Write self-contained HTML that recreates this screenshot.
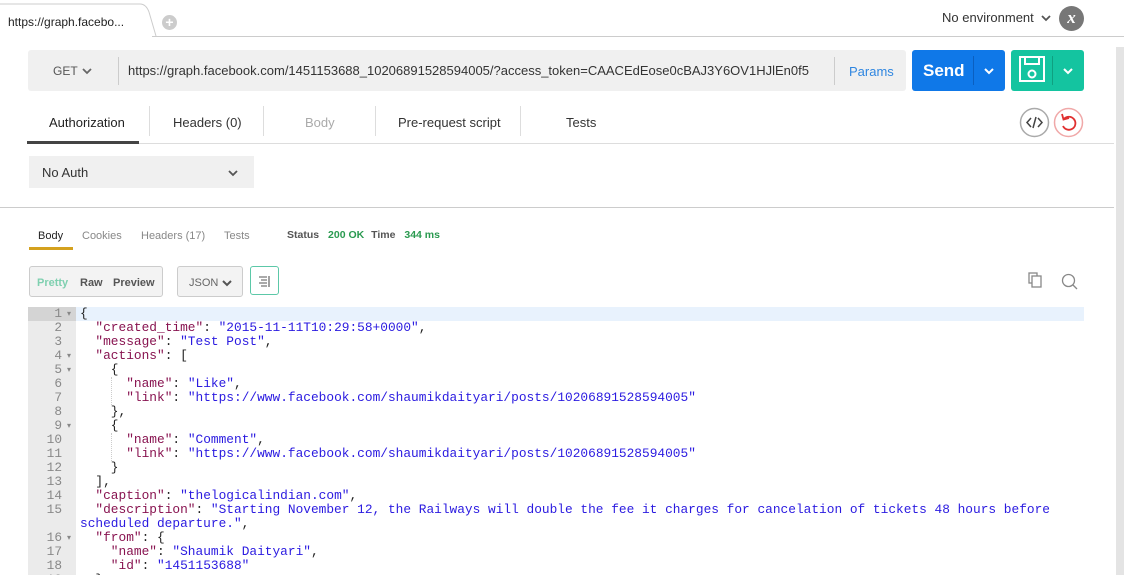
<!DOCTYPE html>
<html><head><meta charset="utf-8"><style>
*{box-sizing:border-box;margin:0;padding:0}
html,body{width:1124px;height:575px;overflow:hidden}
body{background:#fff;font-family:"Liberation Sans",sans-serif;color:#333;position:relative}
.a{position:absolute}
.code{font-family:"Liberation Mono",monospace;font-size:12.83px;line-height:14px;white-space:pre}
.k{color:#881350}.s{color:#2a1ae0}
.ln{position:absolute;left:28px;width:48px;text-align:right;padding-right:14px;color:#888;font-family:"Liberation Mono",monospace;font-size:12.8px;line-height:14px}
</style></head><body>
<div class="a" style="left:0;top:36px;width:1124px;height:1px;background:#ccc"></div>
<svg class="a" style="left:0;top:0" width="160" height="40"><path d="M0 4 H140 Q146 4 149 12 L156 36" fill="#fff" stroke="#ccc"/><rect x="0" y="34" width="152" height="4" fill="#fff"/></svg>
<div class="a" style="left:8px;top:15px;font-size:12px;color:#222">https://graph.facebo...</div>
<div class="a" style="left:162px;top:15px;width:15px;height:15px;border-radius:50%;background:#ccc;color:#fff;font-size:14px;line-height:15px;text-align:center;font-weight:bold">+</div>
<div class="a" style="left:942px;top:10px;font-size:13px;color:#333">No environment</div>
<svg class="a" style="left:1040px;top:14px" width="12" height="8"><path d="M2 2 L6 6 L10 2" fill="none" stroke="#555" stroke-width="1.8"/></svg>
<div class="a" style="left:1059px;top:6px;width:25px;height:25px;border-radius:50%;background:#777;color:#fff;font:bold italic 17px/24px 'Liberation Serif',serif;text-align:center">x</div>
<div class="a" style="left:1116px;top:47px;width:8px;height:528px;background:#e4e4e4"></div>
<div class="a" style="left:28px;top:50px;width:878px;height:41px;background:#f0f0f0;border-radius:3px"></div>
<div class="a" style="left:53px;top:64px;font-size:12px;color:#555">GET</div>
<svg class="a" style="left:81px;top:67px" width="12" height="8"><path d="M2 2 L6 6 L10 2" fill="none" stroke="#666" stroke-width="1.8"/></svg>
<div class="a" style="left:118px;top:57px;width:1px;height:28px;background:#ccc"></div>
<div class="a" style="left:128px;top:63px;font-size:13px;color:#333;width:700px;overflow:hidden;white-space:nowrap">https://graph.facebook.com/1451153688_10206891528594005/?access_token=CAACEdEose0cBAJ3Y6OV1HJlEn0f5</div>
<div class="a" style="left:834px;top:57px;width:1px;height:28px;background:#ccc"></div>
<div class="a" style="left:849px;top:64px;font-size:13px;color:#2f86e0">Params</div>
<div class="a" style="left:912px;top:50px;width:93px;height:41px;background:#0f78e8;border-radius:3px"></div>
<div class="a" style="left:923px;top:61px;font-size:17px;color:#fff;font-weight:bold">Send</div>
<div class="a" style="left:973px;top:56px;width:1px;height:29px;background:#0a5fc0"></div>
<svg class="a" style="left:983px;top:67px" width="12" height="8"><path d="M2 2 L6 6 L10 2" fill="none" stroke="#fff" stroke-width="2"/></svg>
<div class="a" style="left:1011px;top:50px;width:73px;height:41px;background:#14c4a0;border-radius:3px"></div>
<svg class="a" style="left:1019px;top:56px" width="28" height="28"><rect x="1" y="1" width="24" height="24" fill="none" stroke="#fff" stroke-width="2"/><rect x="6" y="1" width="14" height="7" fill="none" stroke="#fff" stroke-width="2"/><circle cx="13" cy="18" r="3.5" fill="none" stroke="#fff" stroke-width="2"/></svg>
<div class="a" style="left:1052px;top:56px;width:1px;height:29px;background:#0fa080"></div>
<svg class="a" style="left:1062px;top:67px" width="12" height="8"><path d="M2 2 L6 6 L10 2" fill="none" stroke="#fff" stroke-width="2"/></svg>
<div class="a" style="left:28px;top:143px;width:1086px;height:1px;background:#ddd"></div>
<div class="a" style="left:27px;top:141px;width:112px;height:3px;background:#444"></div>
<div class="a" style="left:49px;top:115px;font-size:13px;color:#222">Authorization</div>
<div class="a" style="left:149px;top:106px;width:1px;height:30px;background:#ddd"></div>
<div class="a" style="left:173px;top:115px;font-size:13px;color:#333">Headers (0)</div>
<div class="a" style="left:263px;top:106px;width:1px;height:30px;background:#ddd"></div>
<div class="a" style="left:305px;top:115px;font-size:13px;color:#aaa">Body</div>
<div class="a" style="left:375px;top:106px;width:1px;height:30px;background:#ddd"></div>
<div class="a" style="left:398px;top:115px;font-size:13px;color:#333">Pre-request script</div>
<div class="a" style="left:520px;top:106px;width:1px;height:30px;background:#ddd"></div>
<div class="a" style="left:566px;top:115px;font-size:13px;color:#333">Tests</div>
<svg class="a" style="left:1019px;top:107px" width="31" height="31"><circle cx="15.5" cy="15.5" r="14" fill="#fff" stroke="#aaa" stroke-width="1.5"/><path d="M12 11 L8 15.5 L12 20 M19 11 L23 15.5 L19 20 M17 10 L14 21" fill="none" stroke="#444" stroke-width="1.5"/></svg>
<svg class="a" style="left:1053px;top:107px" width="31" height="31"><circle cx="15.5" cy="15.5" r="14" fill="#fff" stroke="#f0a8a8" stroke-width="1.5"/><path d="M11 12 A6.5 6.5 0 1 1 10 19" fill="none" stroke="#e03030" stroke-width="1.8"/><path d="M9 7 L10.5 12.5 L16 11" fill="none" stroke="#e03030" stroke-width="1.8"/></svg>
<div class="a" style="left:29px;top:156px;width:225px;height:32px;background:#f0f0f0"></div>
<div class="a" style="left:42px;top:165px;font-size:13px;color:#333">No Auth</div>
<svg class="a" style="left:227px;top:169px" width="12" height="8"><path d="M2 2 L6 6 L10 2" fill="none" stroke="#555" stroke-width="1.8"/></svg>
<div class="a" style="left:0;top:207px;width:1114px;height:1px;background:#ccc"></div>
<div class="a" style="left:38px;top:230px;font-size:11px;color:#222">Body</div>
<div class="a" style="left:29px;top:247px;width:44px;height:3px;background:#d4a11e"></div>
<div class="a" style="left:82px;top:230px;font-size:11px;color:#888">Cookies</div>
<div class="a" style="left:141px;top:230px;font-size:11px;color:#888">Headers (17)</div>
<div class="a" style="left:224px;top:230px;font-size:11px;color:#888">Tests</div>
<div class="a" style="left:287px;top:229px;font-size:10.5px;color:#555;font-weight:bold">Status <span style="color:#2a9a50;margin-left:6px">200 OK</span> <span style="margin-left:4px">Time</span> <span style="color:#2a9a50;margin-left:6px">344 ms</span></div>
<div class="a" style="left:29px;top:266px;width:134px;height:31px;border:1px solid #ccc;border-radius:3px;background:#f3f3f3"></div>
<div class="a" style="left:37px;top:277px;font-size:11px;font-weight:bold;color:#7fd0b0">Pretty</div>
<div class="a" style="left:80px;top:277px;font-size:11px;font-weight:bold;color:#555">Raw</div>
<div class="a" style="left:113px;top:277px;font-size:11px;font-weight:bold;color:#555">Preview</div>
<div class="a" style="left:177px;top:266px;width:66px;height:31px;border:1px solid #ccc;border-radius:3px;background:#f3f3f3"></div>
<div class="a" style="left:189px;top:277px;font-size:11px;color:#666">JSON</div>
<svg class="a" style="left:221px;top:279px" width="12" height="8"><path d="M2 2 L6 6 L10 2" fill="none" stroke="#555" stroke-width="2"/></svg>
<div class="a" style="left:250px;top:266px;width:29px;height:29px;border:1px solid #5cc8a8;border-radius:3px"></div>
<svg class="a" style="left:258px;top:274px" width="14" height="14"><path d="M1 3 H9 M3 6 H9 M1 9 H9 M3 12 H9 M11 2 V13" stroke="#555" stroke-width="1.1"/></svg>
<svg class="a" style="left:1028px;top:272px" width="16" height="16"><rect x="1" y="1" width="8" height="10" fill="none" stroke="#888" stroke-width="1.3"/><rect x="4" y="4" width="9" height="11" fill="#fff" stroke="#888" stroke-width="1.3"/></svg>
<svg class="a" style="left:1061px;top:273px" width="18" height="18"><circle cx="7.5" cy="7.5" r="6" fill="none" stroke="#888" stroke-width="1.3"/><path d="M12 12 L16 16" stroke="#888" stroke-width="1.3"/></svg>
<div class="a" style="left:28px;top:307px;width:48px;height:268px;background:#ebebeb"></div>
<div class="a" style="left:28px;top:307px;width:48px;height:14px;background:#d4d4d4"></div>
<div class="a" style="left:76px;top:307px;width:1008px;height:14px;background:#e8f2fd"></div>
<div class="ln" style="top:307px">1<br>2<br>3<br>4<br>5<br>6<br>7<br>8<br>9<br>10<br>11<br>12<br>13<br>14<br>15<br><br>16<br>17<br>18<br>19</div>
<div class="a" style="left:67px;top:307px;font-size:8px;line-height:14px;color:#888">▾<br><br><br>▾<br>▾<br><br><br><br>▾<br><br><br><br><br><br><br><br>▾</div>
<div class="a" style="left:111px;top:377px;height:28px;border-left:1px dotted #ccc"></div>
<div class="a" style="left:111px;top:433px;height:28px;border-left:1px dotted #ccc"></div>
<div class="a code" style="left:80px;top:307px;color:#222">{
  <span class="k">"created_time"</span>: <span class="s">"2015-11-11T10:29:58+0000"</span>,
  <span class="k">"message"</span>: <span class="s">"Test Post"</span>,
  <span class="k">"actions"</span>: [
    {
      <span class="k">"name"</span>: <span class="s">"Like"</span>,
      <span class="k">"link"</span>: <span class="s">"https://www.facebook.com/shaumikdaityari/posts/10206891528594005"</span>
    },
    {
      <span class="k">"name"</span>: <span class="s">"Comment"</span>,
      <span class="k">"link"</span>: <span class="s">"https://www.facebook.com/shaumikdaityari/posts/10206891528594005"</span>
    }
  ],
  <span class="k">"caption"</span>: <span class="s">"thelogicalindian.com"</span>,
  <span class="k">"description"</span>: <span class="s">"Starting November 12, the Railways will double the fee it charges for cancelation of tickets 48 hours before</span>
<span class="s">scheduled departure."</span>,
  <span class="k">"from"</span>: {
    <span class="k">"name"</span>: <span class="s">"Shaumik Daityari"</span>,
    <span class="k">"id"</span>: <span class="s">"1451153688"</span>
  }</div>
</body></html>
